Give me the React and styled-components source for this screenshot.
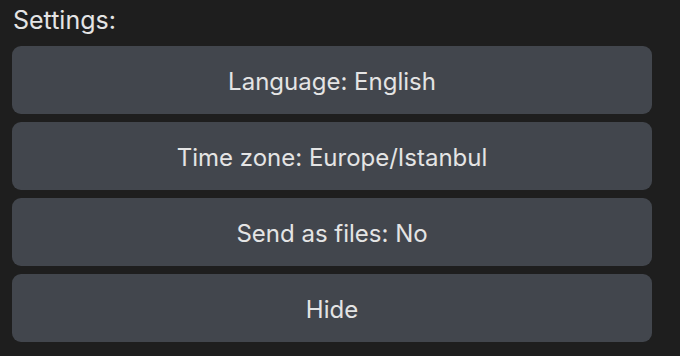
import React from "react";
import styled, { createGlobalStyle } from "styled-components";

const GlobalStyle = createGlobalStyle`
  html, body {
    margin: 0;
    padding: 0;
    background: #1e1e1e;
  }
`;

const options = [
  "Language: English",
  "Time zone: Europe/Istanbul",
  "Send as files: No",
  "Hide",
];

const App = () => {
  return (
    <>
      <GlobalStyle />
      <Wrapper>
        <Title>Settings:</Title>
        <List>
          {options.map((label) => (
            <Button key={label}>{label}</Button>
          ))}
        </List>
      </Wrapper>
    </>
  );
};

export default App;

const Wrapper = styled.div`
  width: 680px;
  height: 356px;
  box-sizing: border-box;
  padding: 4px 28px 0 12px;
  font-family: Inter, "Noto Sans", sans-serif;
  color: #e4e4e4;
`;

const Title = styled.div`
  font-size: 25px;
  line-height: 32px;
  padding-left: 1px;
  margin-bottom: 10px;
`;

const List = styled.div`
  display: flex;
  flex-direction: column;
  gap: 8px;
`;

const Button = styled.button`
  height: 68px;
  padding: 3px 0 0;
  border: none;
  border-radius: 9px;
  background: #42464d;
  color: #e4e4e4;
  font-family: inherit;
  font-size: 24px;
  cursor: pointer;
`;
